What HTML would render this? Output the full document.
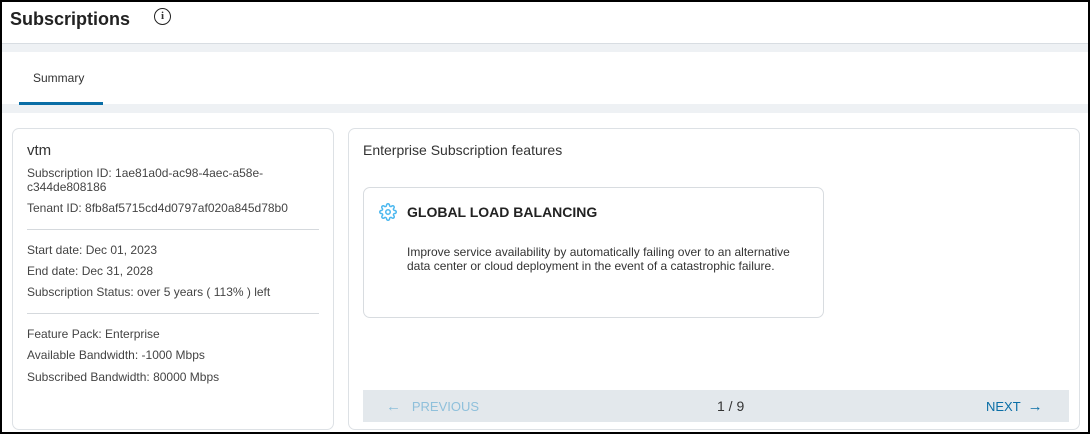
<!DOCTYPE html>
<html><head><style>
*{margin:0;padding:0;box-sizing:border-box}
body{width:1092px;height:435px;background:#fff;font-family:"Liberation Sans",sans-serif;position:relative;overflow:hidden;color:#333}
.frame{position:absolute;left:0;top:0;width:1090px;height:434px;border:2px solid #000}
.abs{position:absolute}
.t{font-size:12px;color:#444}
</style></head><body>
<div class="abs" style="left:2px;top:43px;width:1086px;height:9px;background:#eef1f4;border-top:1px solid #d8dde2"></div>
<div class="abs" style="left:2px;top:104px;width:1086px;height:9px;background:#eef1f4"></div>
<div class="abs" style="left:10px;top:9px;font-size:18px;font-weight:bold;color:#222">Subscriptions</div>
<div class="abs" style="left:154px;top:8px;width:17px;height:17px;border:1.5px solid #222;border-radius:50%;font-size:11px;font-weight:bold;text-align:center;line-height:14px;font-family:'Liberation Serif',serif">i</div>
<div class="abs" style="left:33px;top:71px;font-size:12px;color:#333">Summary</div>
<div class="abs" style="left:19px;top:102px;width:84px;height:3px;background:#0a6ea6"></div>

<div class="abs" style="left:12px;top:128px;width:322px;height:302px;border:1px solid #dde1e5;border-radius:7px"></div>
<div class="abs" style="left:27px;top:142px;font-size:15px;color:#333">vtm</div>
<div class="abs t" style="left:27px;top:166px;line-height:14px">Subscription ID: 1ae81a0d-ac98-4aec-a58e-<br>c344de808186</div>
<div class="abs t" style="left:27px;top:201px">Tenant ID: 8fb8af5715cd4d0797af020a845d78b0</div>
<div class="abs" style="left:27px;top:229px;width:292px;height:1px;background:#d5d9dd"></div>
<div class="abs t" style="left:27px;top:243px">Start date: Dec 01, 2023</div>
<div class="abs t" style="left:27px;top:264px">End date: Dec 31, 2028</div>
<div class="abs t" style="left:27px;top:285px">Subscription Status: over 5 years ( 113% ) left</div>
<div class="abs" style="left:27px;top:313px;width:292px;height:1px;background:#d5d9dd"></div>
<div class="abs t" style="left:27px;top:327px">Feature Pack: Enterprise</div>
<div class="abs t" style="left:27px;top:348px">Available Bandwidth: -1000 Mbps</div>
<div class="abs t" style="left:27px;top:370px">Subscribed Bandwidth: 80000 Mbps</div>

<div class="abs" style="left:348px;top:128px;width:732px;height:302px;border:1px solid #dde1e5;border-radius:7px"></div>
<div class="abs" style="left:363px;top:142px;font-size:14px;color:#333">Enterprise Subscription features</div>
<div class="abs" style="left:363px;top:187px;width:461px;height:131px;border:1px solid #d8dce0;border-radius:7px"></div>
<svg class="abs" style="left:379px;top:203px" width="18" height="18" viewBox="0 0 24 24" fill="none" stroke="#4cb8ef" stroke-width="2"><circle cx="12" cy="12" r="3"/><path d="M19.4 15a1.65 1.65 0 0 0 .33 1.82l.06.06a2 2 0 1 1-2.830 2.83l-.06-.06a1.65 1.65 0 0 0-1.82-.33 1.65 1.65 0 0 0-1 1.51V21a2 2 0 1 1-4 0v-.09A1.65 1.65 0 0 0 9 19.4a1.65 1.65 0 0 0-1.820.33l-.06.06a2 2 0 1 1-2.83-2.83l.06-.06A1.65 1.65 0 0 0 4.68 15a1.65 1.65 0 0 0-1.51-1H3a2 2 0 1 1 0-4h.09A1.65 1.65 0 0 0 4.6 9a1.65 1.65 0 0 0-.33-1.82l-.06-.06a2 2 0 1 1 2.83-2.83l.06.06A1.65 1.65 0 0 0 9 4.68 1.65 1.65 0 0 0 10 3.17V3a2 2 0 1 1 4 0v.09a1.65 1.65 0 0 0 1 1.51 1.65 1.65 0 0 0 1.82-.33l.06-.06a2 2 0 1 1 2.83 2.83l-.06.06A1.65 1.65 0 0 0 19.4 9a1.65 1.65 0 0 0 1.51 1H21a2 2 0 1 1 0 4h-.09a1.65 1.65 0 0 0-1.510 1z"/></svg>
<div class="abs" style="left:407px;top:204px;font-size:14px;font-weight:bold;color:#222">GLOBAL LOAD BALANCING</div>
<div class="abs" style="left:407px;top:245px;font-size:12px;line-height:14px;color:#333;white-space:nowrap">Improve service availability by automatically failing over to an alternative<br>data center or cloud deployment in the event of a catastrophic failure.</div>

<div class="abs" style="left:363px;top:390px;width:706px;height:32px;background:#e3e8ec"></div>
<div class="abs" style="left:386px;top:398px;font-size:13px;color:#8fc0db"><span style="font-size:15px">←</span>&nbsp;&nbsp; PREVIOUS</div>
<div class="abs" style="left:717px;top:398px;font-size:14px;color:#333">1 / 9</div>
<div class="abs" style="left:986px;top:398px;font-size:13px;color:#0a6ea6">NEXT &nbsp;<b style="font-size:15px">→</b></div>
<div class="frame"></div>
</body></html>
